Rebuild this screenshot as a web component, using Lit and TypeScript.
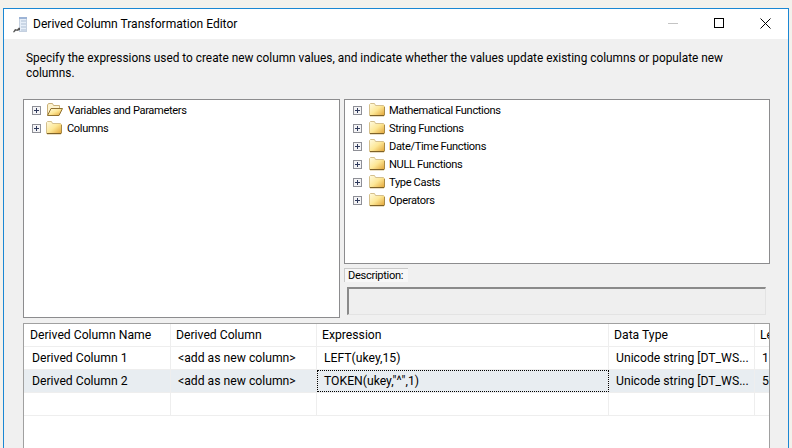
import { LitElement, html, css, svg } from "lit";
import { customElement } from "lit/decorators.js";

const plus = html`<svg class="plus" width="9" height="9" viewBox="0 0 9 9"><rect x=".5" y=".5" width="8" height="8" fill="#f4f4f6" stroke="#8e8f96"/><path d="M2 4.500h5M4.500 2v5" stroke="#2f3a5c" stroke-width="1"/></svg>`;
const grad = svg`<defs><linearGradient id="fg" x1="0" y1="0" x2="1" y2="1"><stop offset="0" stop-color="#fffbe2"/><stop offset=".5" stop-color="#fde796"/><stop offset="1" stop-color="#e0a032"/></linearGradient></defs>`;
const folder = html`<svg class="folder" width="16" height="14" viewBox="0 0 16 14">${grad}<path d="M.5 3V1.500L1.500.5h4l1 2h8l1 1v9l-.5.5H1L.5 12z" fill="url(#fg)" stroke="#d5c08e"/><path d="M1 12.500h14" stroke="#7d6128"/><path d="M15.500 4v8" stroke="#a98a46"/></svg>`;
const openFolder = html`<svg class="folder" width="17" height="14" viewBox="0 0 17 14">${grad}<path d="M1.500 12V2l1-1.500h4l1 2h6v2.500" fill="#fdf3cf" stroke="#c9b07a"/><path d="M1.500 12.500L5 5.500h11.500L13 12.500z" fill="url(#fg)" stroke="#8f7030"/></svg>`;

const rows = [
  ["Derived Column 1", "<add as new column>", "LEFT(ukey,15)", "Unicode string [DT_WS...", "1"],
  ["Derived Column 2", "<add as new column>", 'TOKEN(ukey,"^",1)', "Unicode string [DT_WS...", "50"],
];

@customElement("app-root")
export class AppRoot extends LitElement {
  static styles = css`
    :host { display: block; width: 792px; height: 448px; overflow: hidden; background: #f3f1ec; font-family: Roboto, "Open Sans", sans-serif; color: #000; }
    .win { margin: 8px 3px 0 3px; height: 440px; box-sizing: border-box; border: 1px solid #1b87d3; border-bottom: 0; background: #f0f0f0; display: flex; flex-direction: column; overflow: hidden; }
    .title { height: 30px; flex: none; background: #fff; display: flex; align-items: center; }
    .appicon { margin: 2px 0 0 8px; flex: none; }
    .title span { margin-left: 5px; font-size: 12.05px; }
    .ctrls { margin: 0 0 2px auto; display: flex; align-items: center; }
    .ctrls svg { display: block; }
    .c1 { margin-right: 36px; } .c2 { margin-right: 36px; } .c3 { margin-right: 17px; }
    .intro { margin: 12px 0 0 22px; width: 730px; height: 30px; font-size: 11.85px; line-height: 15px; }
    .main { margin: 18px 0 0 19px; display: flex; gap: 4px; align-items: flex-start; }
    .tree { box-sizing: border-box; background: #fff; border: 1px solid #8c8c8e; padding: 1px 0 0 8px; font-size: 11.1px; letter-spacing: -0.35px; }
    .left { width: 317px; height: 219px; }
    .side { display: flex; flex-direction: column; }
    .right { width: 426px; height: 165px; }
    .right .plus { margin-right: 7px; }
    .right .folder { margin-right: 4px; }
    .node { height: 18px; display: flex; align-items: center; white-space: nowrap; }
    .plus { margin: 1px 5px 0 0; flex: none; }
    .folder { margin-right: 5px; flex: none; }
    .desc-label { margin-top: 4px; width: 64px; height: 14px; box-sizing: border-box; border-top: 1px solid #c9c9c9; border-left: 1px solid #c9c9c9; background: #f7f7f7; font-size: 11.1px; letter-spacing: -0.3px; line-height: 13px; padding-left: 3px; }
    .desc { margin: 5px 0 0 3px; width: 419px; height: 28px; box-sizing: border-box; border: 1px solid #e3e3e3; border-top: 2px solid #8a8a8a; border-left: 2px solid #8a8a8a; background: #efefef; }
    .grid { margin: 5px 0 0 19px; width: 747px; flex: 1; box-sizing: border-box; border: 1px solid #a0a0a0; border-bottom: 0; background: #fff; overflow: hidden; font-size: 12.2px; }
    .row { display: grid; grid-template-columns: 147px 146px 292px 146px 30px; height: 23px; box-sizing: border-box; border-bottom: 1px solid #eeeeee; }
    .row.sel { background: #e8edf1; }
    .cell { box-sizing: border-box; border-right: 1px solid #eeeeee; white-space: nowrap; overflow: hidden; line-height: 22px; padding-left: 7px; }
    .cell:first-child { padding-left: 8px; }
    .head .cell { padding-left: 5px; }
    .head .cell:first-child { padding-left: 6px; }
    .cell.focus { outline: 1px dotted #000; outline-offset: -1px; }
  `;

  render() {
    const left = [["Variables and Parameters", true], ["Columns", false]] as const;
    const right = ["Mathematical Functions", "String Functions", "Date/Time Functions", "NULL Functions", "Type Casts", "Operators"];
    return html`
      <div class="win">
        <div class="title">
          <svg class="appicon" width="16" height="16" viewBox="0 0 16 16">
            <rect x="7.500" y=".5" width="7" height="14" fill="#e6eef8" stroke="#c4d0e0"/>
            <path d="M9 4h5M9 7h5M9 10h5M9 13h5" stroke="#aebfd4"/>
            <rect x="7" y="0" width="8" height="2" fill="#9db4d6"/>
            <path d="M1 15l2-3 2 .5 2-2 1 .5v2l-3 1-1-.5-2 2z" fill="#555"/>
          </svg>
          <span>Derived Column Transformation Editor</span>
          <div class="ctrls">
            <svg class="c1" width="10" height="10" viewBox="0 0 10 10"><path d="M0 5.500h10" stroke="#c4c4c4"/></svg>
            <svg class="c2" width="10" height="10" viewBox="0 0 10 10"><rect x=".5" y=".5" width="9" height="9" fill="none" stroke="#000"/></svg>
            <svg class="c3" width="11" height="11" viewBox="0 0 11 11"><path d="M.5.500l10 10M10.500.500l-10 10" stroke="#000" fill="none"/></svg>
          </div>
        </div>
        <div class="intro">Specify the expressions used to create new column values, and indicate whether the values update existing columns or populate new columns.</div>
        <div class="main">
          <div class="tree left">
            ${left.map(([t, open]) => html`<div class="node">${plus}${open ? openFolder : folder}<span>${t}</span></div>`)}
          </div>
          <div class="side">
            <div class="tree right">
              ${right.map((t) => html`<div class="node">${plus}${folder}<span>${t}</span></div>`)}
            </div>
            <div class="desc-label">Description:</div>
            <div class="desc"></div>
          </div>
        </div>
        <div class="grid">
          <div class="row head">
            ${["Derived Column Name", "Derived Column", "Expression", "Data Type", "Length"].map((h) => html`<div class="cell">${h}</div>`)}
          </div>
          ${rows.map((r, i) => html`<div class="row ${i === 1 ? "sel" : ""}">
            ${r.map((c, j) => html`<div class="cell ${i === 1 && j === 2 ? "focus" : ""}">${c}</div>`)}
          </div>`)}
          <div class="row">${[0, 1, 2, 3, 4].map(() => html`<div class="cell"></div>`)}</div>
        </div>
      </div>
    `;
  }
}
